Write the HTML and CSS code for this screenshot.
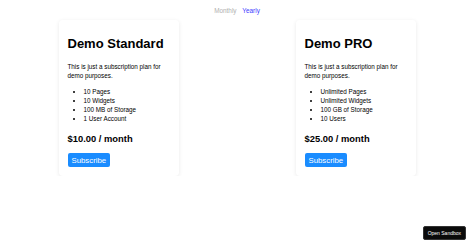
FILE: index.html
```html
<!DOCTYPE html>
<html lang="en">
<head>
  <meta charset="UTF-8" />
  <meta name="viewport" content="width=device-width, initial-scale=1.0"/>
  <title>Subscription Plans</title>
  <link rel="stylesheet" href="styles.css">
</head>
<body>

  <div class="toggle">
    <span class="toggle-option">Monthly</span>
    <span class="toggle-option active">Yearly</span>
  </div>

  <div class="plans">
    <div class="card">
      <h2>Demo Standard</h2>
      <p>This is just a subscription plan for demo purposes.</p>
      <ul>
        <li>10 Pages</li>
        <li>10 Widgets</li>
        <li>100 MB of Storage</li>
        <li>1 User Account</li>
      </ul>
      <div class="price">$10.00 / month</div>
      <button class="subscribe-btn">Subscribe</button>
    </div>

    <div class="card">
      <h2>Demo PRO</h2>
      <p>This is just a subscription plan for demo purposes.</p>
      <ul>
        <li>Unlimited Pages</li>
        <li>Unlimited Widgets</li>
        <li>100 GB of Storage</li>
        <li>10 Users</li>
      </ul>
      <div class="price">$25.00 / month</div>
      <button class="subscribe-btn">Subscribe</button>
    </div>
  </div>

  <a class="sandbox-btn" href="#">Open Sandbox</a>

</body>
</html>
```

FILE: styles.css
```css
* {
  box-sizing: border-box;
  margin: 0;
  padding: 0;
  font-family: 'Liberation Sans', Arial, sans-serif;
}

body {
  background: #fff;
  color: #000;
}

.toggle {
  text-align: center;
  font-size: 6.4px;
  padding-top: 7px;
  line-height: 8px;
}

.toggle-option {
  color: #b0b0b0;
  margin: 0 2px;
  cursor: pointer;
}

.toggle-option.active {
  color: #3d3dff;
}

.plans {
  display: flex;
  justify-content: space-around;
  margin-top: 5px;
}

.card {
  width: 120px;
  padding: 9px;
  border-radius: 4px;
  box-shadow: 0 1px 4px rgba(0, 0, 0, 0.09);
}

h2 {
  font-size: 13px;
  font-weight: bold;
  line-height: 15px;
  margin-top: 7px;
  margin-bottom: 11px;
}

p, li {
  font-size: 6.3px;
  line-height: 9.3px;
}

ul {
  margin: 6px 0 9px;
  padding-left: 16px;
}

.price {
  font-size: 9.4px;
  font-weight: bold;
  line-height: 11px;
  margin-bottom: 5px;
}

.subscribe-btn {
  background-color: #1a8cff;
  color: #fff;
  border: none;
  border-radius: 2px;
  font-size: 7.8px;
  padding: 0 4px;
  height: 14px;
  cursor: pointer;
}

.sandbox-btn {
  position: fixed;
  right: 8px;
  bottom: 8px;
  background: #0a0a0a;
  color: #fff;
  border: 1px solid #333;
  border-radius: 2px;
  font-size: 5px;
  padding: 3px 4px;
  text-decoration: none;
}
```
